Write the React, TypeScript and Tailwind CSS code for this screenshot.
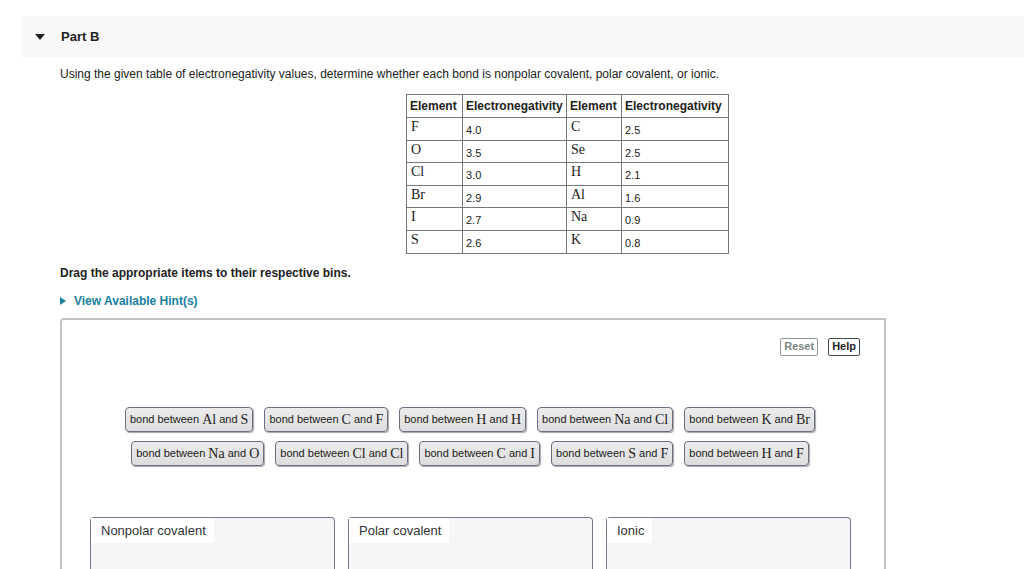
import React from 'react';

const sans = { fontFamily: "'Liberation Sans', Arial, sans-serif" };
const serif = "font-['Liberation_Serif',serif]";

const table: [string, string, string, string][] = [
  ['F', '4.0', 'C', '2.5'],
  ['O', '3.5', 'Se', '2.5'],
  ['Cl', '3.0', 'H', '2.1'],
  ['Br', '2.9', 'Al', '1.6'],
  ['I', '2.7', 'Na', '0.9'],
  ['S', '2.6', 'K', '0.8'],
];

const rows: [string, string][][] = [
  [['Al', 'S'], ['C', 'F'], ['H', 'H'], ['Na', 'Cl'], ['K', 'Br']],
  [['Na', 'O'], ['Cl', 'Cl'], ['C', 'I'], ['S', 'F'], ['H', 'F']],
];

const Item: React.FC<{ a: string; b: string }> = ({ a, b }) => (
  <div className="h-[25px] px-[4px] flex items-center rounded-[4px] border border-[#6d6d80] bg-gradient-to-b from-[#ececec] to-[#dedede] shadow-[1px_1px_1px_rgba(0,0,0,0.35)] text-[11px] text-[#222] whitespace-nowrap">
    bond between&nbsp;<span className={`${serif} text-[14px]`}>{a}</span>&nbsp;and&nbsp;
    <span className={`${serif} text-[14px]`}>{b}</span>
  </div>
);

const Bin: React.FC<{ label: string }> = ({ label }) => (
  <div className="w-[245px] h-[80px] rounded-t-[4px] border border-b-0 border-[#77778f] bg-[#f6f6f6]">
    <div className="inline-block bg-white pl-[10px] pr-[8px] pt-[3px] pb-[3px] text-[13px] text-[#333]">{label}</div>
  </div>
);

export default function App() {
  return (
    <div className="w-[1024px] h-[569px] overflow-hidden bg-white text-[#222]" style={sans}>
      <div className="pt-[16px] pl-[22px]">
        <div className="h-[41px] bg-[#f8f8f8] flex items-center">
          <svg width="10" height="6" viewBox="0 0 10 6" className="ml-[13px] mt-[1px]">
            <path d="M0 0h10L5 6z" fill="#222" />
          </svg>
          <span className="ml-[16px] text-[13px] font-bold">Part B</span>
        </div>
      </div>

      <div className="pl-[60px]">
        <p className="mt-[10px] text-[12px] leading-[14px]">
          Using the given table of electronegativity values, determine whether each bond is nonpolar covalent, polar covalent, or ionic.
        </p>

        <div className="mt-[13px] ml-[346px]">
          <table className="table-fixed w-[322px] border-collapse border border-[#333] text-[11px]">
            <colgroup>
              <col className="w-[56px]" />
              <col className="w-[104px]" />
              <col className="w-[55px]" />
              <col className="w-[107px]" />
            </colgroup>
            <thead>
              <tr className="h-[23px]">
                {['Element', 'Electronegativity', 'Element', 'Electronegativity'].map((h, i) => (
                  <th key={i} className="border border-[#777] px-[3px] text-[12px] font-bold text-left whitespace-nowrap">
                    {h}
                  </th>
                ))}
              </tr>
            </thead>
            <tbody>
              {table.map((r, i) => (
                <tr key={i} className="h-[22.6px]">
                  <td className={`border border-[#777] pl-[4px] align-top ${serif} text-[14px] leading-[17px]`}>{r[0]}</td>
                  <td className="border border-[#777] pl-[3px] pt-[3px]">{r[1]}</td>
                  <td className={`border border-[#777] pl-[4px] align-top ${serif} text-[14px] leading-[17px]`}>{r[2]}</td>
                  <td className="border border-[#777] pl-[3px] pt-[3px]">{r[3]}</td>
                </tr>
              ))}
            </tbody>
          </table>
        </div>

        <p className="mt-[12px] text-[12px] font-bold leading-[14px]">Drag the appropriate items to their respective bins.</p>

        <div className="mt-[12px] flex items-center text-[#17809f] text-[12px] font-bold">
          <svg width="6" height="8" viewBox="0 0 6 8" className="mr-[8px]">
            <path d="M0 0l6 4-6 4z" fill="#17809f" />
          </svg>
          View Available Hint(s)
        </div>

        <div className="mt-[8px] w-[826px] h-[260px] rounded-tl-[4px] border-l-2 border-t-2 border-r-2 border-[#c4c4c4]">
          <div className="flex justify-end gap-[10px] pt-[18px] pr-[24px]">
            <div className="h-[18px] px-[3px] flex items-center rounded-[2px] border border-[#8a9a9a] text-[11px] font-bold text-[#7a8585]">Reset</div>
            <div className="h-[18px] px-[3px] flex items-center rounded-[2px] border border-[#3a4a4a] text-[11px] font-bold text-[#222]">Help</div>
          </div>

          <div className="mt-[51px] flex flex-col items-center gap-[9px] pr-[6px]">
            {rows.map((row, i) => (
              <div key={i} className="flex gap-[11px]">
                {row.map(([a, b], j) => (
                  <Item key={j} a={a} b={b} />
                ))}
              </div>
            ))}
          </div>

          <div className="mt-[51px] pl-[28px] flex gap-[13px]">
            <Bin label="Nonpolar covalent" />
            <Bin label="Polar covalent" />
            <Bin label="Ionic" />
          </div>
        </div>
      </div>
    </div>
  );
}
